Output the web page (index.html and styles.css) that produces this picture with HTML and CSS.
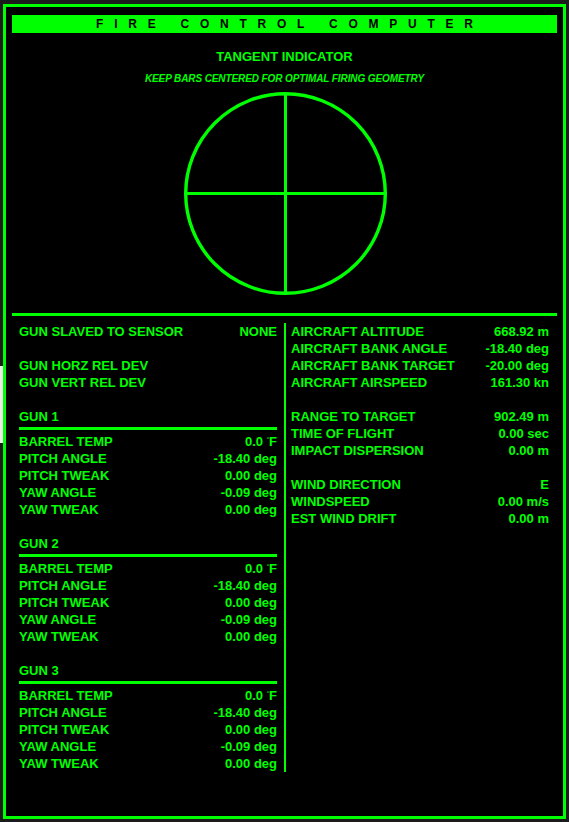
FILE: index.html
```html
<!DOCTYPE html>
<html>
<head>
<meta charset="utf-8">
<link rel="stylesheet" href="styles.css">
</head>
<body>
<div class="edge-mark"></div>
<div class="fcc">
  <div class="titlebar">FIRE CONTROL COMPUTER</div>
  <div class="ti-title">TANGENT INDICATOR</div>
  <div class="ti-sub">KEEP BARS CENTERED FOR OPTIMAL FIRING GEOMETRY</div>
  <div class="indicator">
    <svg width="203" height="203" viewBox="0 0 203 203">
      <line x1="101.5" y1="1" x2="101.5" y2="201" stroke="#00ff00" stroke-width="3"/>
      <line x1="3" y1="101.5" x2="200" y2="101.5" stroke="#00ff00" stroke-width="3"/>
      <circle cx="101.5" cy="101.5" r="99.8" fill="none" stroke="#00ff00" stroke-width="3.4"/>
    </svg>
  </div>
  <div class="separator"></div>
  <div class="columns">
    <div class="col col-left">
      <div class="group">
        <div class="row"><span>GUN SLAVED TO SENSOR</span><span>NONE</span></div>
      </div>
      <div class="group">
        <div class="row"><span>GUN HORZ REL DEV</span><span></span></div>
        <div class="row"><span>GUN VERT REL DEV</span><span></span></div>
      </div>
      <div class="group">
        <div class="gun-head">GUN 1</div>
        <div class="row"><span>BARREL TEMP</span><span>0.0 <span class="deg">°</span>F</span></div>
        <div class="row"><span>PITCH ANGLE</span><span>-18.40 deg</span></div>
        <div class="row"><span>PITCH TWEAK</span><span>0.00 deg</span></div>
        <div class="row"><span>YAW ANGLE</span><span>-0.09 deg</span></div>
        <div class="row"><span>YAW TWEAK</span><span>0.00 deg</span></div>
      </div>
      <div class="group">
        <div class="gun-head">GUN 2</div>
        <div class="row"><span>BARREL TEMP</span><span>0.0 <span class="deg">°</span>F</span></div>
        <div class="row"><span>PITCH ANGLE</span><span>-18.40 deg</span></div>
        <div class="row"><span>PITCH TWEAK</span><span>0.00 deg</span></div>
        <div class="row"><span>YAW ANGLE</span><span>-0.09 deg</span></div>
        <div class="row"><span>YAW TWEAK</span><span>0.00 deg</span></div>
      </div>
      <div class="group">
        <div class="gun-head">GUN 3</div>
        <div class="row"><span>BARREL TEMP</span><span>0.0 <span class="deg">°</span>F</span></div>
        <div class="row"><span>PITCH ANGLE</span><span>-18.40 deg</span></div>
        <div class="row"><span>PITCH TWEAK</span><span>0.00 deg</span></div>
        <div class="row"><span>YAW ANGLE</span><span>-0.09 deg</span></div>
        <div class="row"><span>YAW TWEAK</span><span>0.00 deg</span></div>
      </div>
    </div>
    <div class="col col-right">
      <div class="group">
        <div class="row"><span>AIRCRAFT ALTITUDE</span><span>668.92 m</span></div>
        <div class="row"><span>AIRCRAFT BANK ANGLE</span><span>-18.40 deg</span></div>
        <div class="row"><span>AIRCRAFT BANK TARGET</span><span>-20.00 deg</span></div>
        <div class="row"><span>AIRCRAFT AIRSPEED</span><span>161.30 kn</span></div>
      </div>
      <div class="group">
        <div class="row"><span>RANGE TO TARGET</span><span>902.49 m</span></div>
        <div class="row"><span>TIME OF FLIGHT</span><span>0.00 sec</span></div>
        <div class="row"><span>IMPACT DISPERSION</span><span>0.00 m</span></div>
      </div>
      <div class="group">
        <div class="row"><span>WIND DIRECTION</span><span>E</span></div>
        <div class="row"><span>WINDSPEED</span><span>0.00 m/s</span></div>
        <div class="row"><span>EST WIND DRIFT</span><span>0.00 m</span></div>
      </div>
    </div>
  </div>
</div>
</body>
</html>
```
FILE: styles.css
```css
html, body {
  margin: 0;
  padding: 0;
  background: #1b1b1b;
}
body {
  font-family: "Liberation Sans", Arial, sans-serif;
  color: #00ff00;
}
.edge-mark {
  position: absolute;
  left: 0;
  top: 366px;
  width: 3px;
  height: 77px;
  background: #ececec;
}
.fcc {
  box-sizing: border-box;
  margin: 4px 3px 0 3px;
  height: 815px;
  border: 3px solid #00ff00;
  background: #000;
  padding: 8px 6px 0 6px;
}
.titlebar {
  background: #00ff00;
  color: #000;
  height: 18px;
  line-height: 18px;
  font-size: 12px;
  font-weight: bold;
  letter-spacing: 10.75px;
  text-align: center;
  padding-left: 10.75px;
}
.ti-title {
  margin-top: 16px;
  font-size: 13px;
  line-height: 15px;
  font-weight: bold;
  text-align: center;
}
.ti-sub {
  margin-top: 9px;
  font-size: 10px;
  line-height: 12px;
  font-style: italic;
  font-weight: bold;
  letter-spacing: -0.1px;
  text-align: center;
}
.indicator {
  margin-top: 7px;
  height: 203px;
  display: flex;
  justify-content: center;
}
.indicator svg {
  display: block;
  margin-left: 1px;
}
.separator {
  margin-top: 18px;
  border-top: 3px solid #00ff00;
}
.columns {
  margin-top: 7px;
  display: flex;
  align-items: stretch;
}
.col {
  box-sizing: border-box;
  font-size: 13px;
  line-height: 17px;
  font-weight: bold;
}
.col-left {
  width: 272px;
  padding: 0 7px 0 7px;
}
.col-right {
  flex: 1;
  border-left: 2px solid #00ff00;
  padding: 0 8px 0 5px;
}
.group + .group {
  margin-top: 17px;
}
.row {
  display: flex;
  justify-content: space-between;
  height: 17px;
  white-space: nowrap;
}
.gun-head {
  height: 17px;
  padding-bottom: 2px;
  border-bottom: 3px solid #00ff00;
  margin-bottom: 3px;
}
.deg {
  font-size: 6px;
  vertical-align: 5px;
  line-height: 0;
}
```
